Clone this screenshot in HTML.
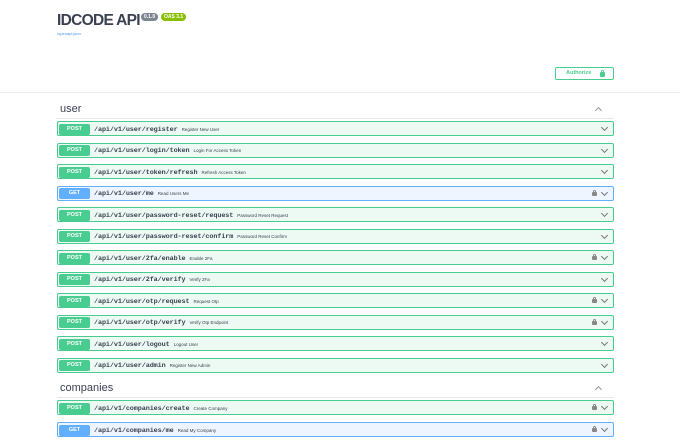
<!DOCTYPE html>
<html><head><meta charset="utf-8"><style>
*{margin:0;padding:0;box-sizing:border-box}
body{width:680px;height:441px;background:#fff;font-family:"Liberation Sans",sans-serif;position:relative;overflow:hidden;color:#3b4151}
.a{position:absolute}
.title{left:57px;top:12px;font-size:15.5px;font-weight:bold;color:#3b4151;letter-spacing:-0.7px}
.ver{top:13px;height:8px;border-radius:4px;font-size:5px;font-weight:bold;color:#fff;line-height:8px;padding:0 3px}
.link{left:57px;top:31px;font-size:4px;color:#4990e2}
.sep{left:0;width:680px;top:92px;height:1px;background:#ececec}
.auth{left:555px;top:67px;width:59px;height:13px;border:1px solid #49cc90;border-radius:2px;font-size:5.5px;color:#49cc90;font-weight:bold;line-height:11px;padding-left:10px}
.auth i{position:absolute;right:8px;top:3.5px;width:5px;height:5px;background:#49cc90;border-radius:1px}
.auth i:before{content:"";position:absolute;left:1px;top:-2px;width:3px;height:3px;border:1px solid #49cc90;border-bottom:0;border-radius:2px 2px 0 0;box-sizing:border-box}
.tag{left:60px;font-size:11px;color:#3b4151}
.tagline{left:57px;width:557px;height:1px;background:#e4e6e9}
.car{left:596px;width:5px;height:5px;border-left:1px solid #999;border-top:1px solid #999;transform:rotate(45deg)}
.row{left:57px;width:557px;height:15px;border:1px solid #49cc90;background:#edf9f3;border-radius:2px}
.row.g{border-color:#61affe;background:#eef5fe}
.b{position:absolute;left:1px;top:1.5px;width:31px;height:11px;background:#49cc90;border-radius:2px;color:#fff;font-size:5.5px;font-weight:bold;text-align:center;line-height:11px}
.g .b{background:#61affe}
.p{position:absolute;left:36px;top:2.5px;font-family:"Liberation Mono",monospace;font-size:6.8px;color:#3b4151;line-height:10px;font-weight:bold;letter-spacing:-0.1px}
.p span{font-family:"Liberation Sans",sans-serif;font-weight:normal;font-size:4.5px;margin-left:4px;color:#3b4151;letter-spacing:0}
.ch{position:absolute;right:6px;top:3px;width:5px;height:5px;border-right:1px solid #777;border-bottom:1px solid #777;transform:rotate(45deg)}
.lk{position:absolute;right:16px;top:5px;width:5px;height:4px;background:#888;border-radius:1px}
.lk:before{content:"";position:absolute;left:1px;top:-2px;width:3px;height:3px;border:1px solid #888;border-bottom:0;border-radius:2px 2px 0 0;box-sizing:border-box}
</style></head><body>
<div class="a title">IDCODE API</div>
<div class="a ver" style="left:141px;background:#7d8492">0.1.0</div>
<div class="a ver" style="left:161px;background:#89bf04">OAS 3.1</div>
<div class="a link">/openapi.json</div>
<div class="a auth">Authorize<i></i></div>
<div class="a sep"></div>

<div class="a tag" style="top:103px">user</div>
<div class="a car" style="top:108px"></div>
<div class="a tagline" style="top:118px"></div>

<div class="a row" style="top:121px"><div class="b">POST</div><div class="p">/api/v1/user/register<span>Register New User</span></div><div class="ch"></div></div>
<div class="a row" style="top:142.5px"><div class="b">POST</div><div class="p">/api/v1/user/login/token<span>Login For Access Token</span></div><div class="ch"></div></div>
<div class="a row" style="top:164px"><div class="b">POST</div><div class="p">/api/v1/user/token/refresh<span>Refresh Access Token</span></div><div class="ch"></div></div>
<div class="a row g" style="top:185.5px"><div class="b">GET</div><div class="p">/api/v1/user/me<span>Read Users Me</span></div><div class="lk"></div><div class="ch"></div></div>
<div class="a row" style="top:207px"><div class="b">POST</div><div class="p">/api/v1/user/password-reset/request<span>Password Reset Request</span></div><div class="ch"></div></div>
<div class="a row" style="top:228.5px"><div class="b">POST</div><div class="p">/api/v1/user/password-reset/confirm<span>Password Reset Confirm</span></div><div class="ch"></div></div>
<div class="a row" style="top:250px"><div class="b">POST</div><div class="p">/api/v1/user/2fa/enable<span>Enable 2Fa</span></div><div class="lk"></div><div class="ch"></div></div>
<div class="a row" style="top:271.5px"><div class="b">POST</div><div class="p">/api/v1/user/2fa/verify<span>Verify 2Fa</span></div><div class="ch"></div></div>
<div class="a row" style="top:293px"><div class="b">POST</div><div class="p">/api/v1/user/otp/request<span>Request Otp</span></div><div class="lk"></div><div class="ch"></div></div>
<div class="a row" style="top:314.5px"><div class="b">POST</div><div class="p">/api/v1/user/otp/verify<span>Verify Otp Endpoint</span></div><div class="lk"></div><div class="ch"></div></div>
<div class="a row" style="top:336px"><div class="b">POST</div><div class="p">/api/v1/user/logout<span>Logout User</span></div><div class="ch"></div></div>
<div class="a row" style="top:357.5px"><div class="b">POST</div><div class="p">/api/v1/user/admin<span>Register New Admin</span></div><div class="ch"></div></div>

<div class="a tag" style="top:382px">companies</div>
<div class="a car" style="top:387px"></div>
<div class="a tagline" style="top:397px"></div>

<div class="a row" style="top:400px"><div class="b">POST</div><div class="p">/api/v1/companies/create<span>Create Company</span></div><div class="lk"></div><div class="ch"></div></div>
<div class="a row g" style="top:422px"><div class="b">GET</div><div class="p">/api/v1/companies/me<span>Read My Company</span></div><div class="lk"></div><div class="ch"></div></div>
</body></html>
